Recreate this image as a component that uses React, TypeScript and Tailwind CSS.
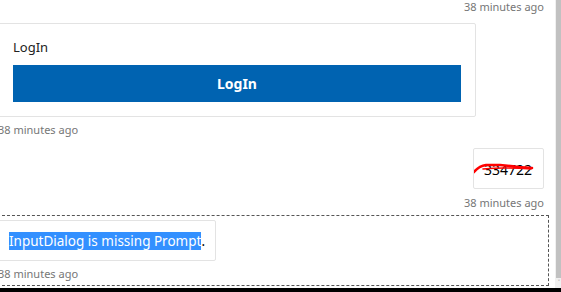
import React from 'react';

const font = { fontFamily: '"Noto Sans", "Open Sans", sans-serif' };

const Stamp: React.FC<{ right?: boolean; className?: string }> = ({ right, className }) => (
  <div className={`text-[11px] leading-[16px] text-[#767676] ${right ? 'text-right' : ''} ${className ?? ''}`}>
    38 minutes ago
  </div>
);

const Captcha: React.FC = () => (
  <div className="relative w-[71px] h-[41px] border border-[#e3e3e3] rounded-[2px] bg-white flex items-center justify-end pr-[11px]">
    <span className="text-[14px] leading-[16px] text-black mt-[3px]">334722</span>
    {/* red scribble over the code */}
    <svg className="absolute left-0 top-0" width="71" height="41" viewBox="0 0 71 41">
      <path d="M0 23 Q5 17 12 16 L26 16 Q36 17 44 18 L58 19" fill="none" stroke="#ff0000" strokeWidth="2.6" strokeLinecap="round" />
      <path d="M9 20 Q20 19 30 19 Q44 19 57 20" fill="none" stroke="#ff0000" strokeWidth="1.6" strokeLinecap="round" />
    </svg>
  </div>
);

export default function App() {
  return (
    <div className="w-[561px] h-[292px] overflow-hidden bg-white flex flex-col" style={font}>
      <div className="flex-1 flex min-h-0">
        {/* chat content */}
        <div className="flex-1 min-w-0 flex flex-col pr-[11px] ml-[-2px]">
          <Stamp right className="-mt-[1px]" />

          <div className="mt-[8px] w-[478px] border border-[#e3e3e3] rounded-[2px] pt-[15px] pb-[14px] px-[14px]">
            <div className="text-[13px] leading-[17px] text-[#222]">LogIn</div>
            <button className="mt-[9px] w-full h-[37px] bg-[#0063b1] text-white text-[14px] font-bold">
              LogIn
            </button>
          </div>
          <Stamp className="mt-[5px]" />

          <div className="mt-[10px] flex justify-end">
            <Captcha />
          </div>
          <Stamp right className="mt-[6px]" />

          <div className="mt-[4px] -mr-[5px] -ml-[1px] border border-dashed border-[#555] pt-[4px] pb-[3px]">
            <div className="w-[218px] border border-[#e3e3e3] rounded-[2px] h-[41px] flex items-center pl-[10px]">
              <span className="text-[13.5px] leading-[18px] text-black">
                <span className="bg-[#3390ff] text-white">InputDialog is missing Prompt</span>.
              </span>
            </div>
            <Stamp className="mt-[5px]" />
          </div>
        </div>

        {/* scrollbar */}
        <div className="w-[6px] flex flex-col bg-[#f0f0f0]">
          <div className="h-[278px] ml-[1px] bg-[#c1c1c1]" />
          <div className="flex-1 flex justify-center text-[7px] leading-[8px] text-[#777] pt-[1px] pl-[2px]">˅</div>
        </div>
      </div>
      <div className="h-[4px] bg-black" />
    </div>
  );
}
